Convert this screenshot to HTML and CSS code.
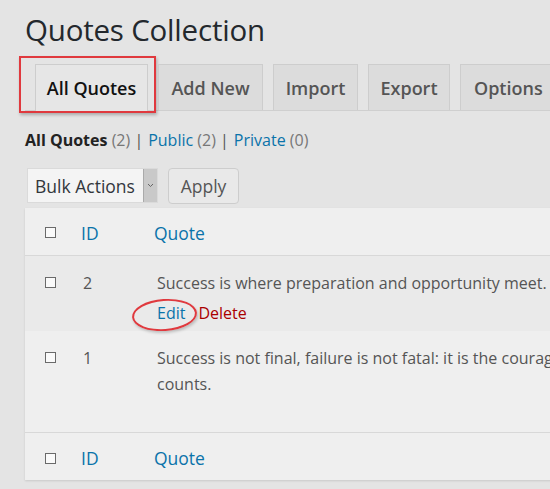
FILE: index.html
```html
<!DOCTYPE html>
<html>
<head>
<meta charset="utf-8">
<link rel="stylesheet" href="styles.css">
</head>
<body>
<div class="wrap">
  <h1 class="title">Quotes Collection</h1>
  <nav class="tabs">
    <a class="tab active">All Quotes<span class="callout-box"></span></a>
    <a class="tab">Add New</a>
    <a class="tab">Import</a>
    <a class="tab">Export</a>
    <a class="tab">Options</a>
  </nav>
  <ul class="filters">
    <li><b>All Quotes</b> <span class="count">(2)</span> |</li>
    <li><a class="link">Public</a> <span class="count">(2)</span> |</li>
    <li><a class="link">Private</a> <span class="count">(0)</span></li>
  </ul>
  <div class="bulk">
    <div class="select"><span class="select-label">Bulk Actions</span><span class="select-arrow"><svg width="7" height="5" viewBox="0 0 7 5"><path d="M1 1l2.5 2.5L6 1" fill="none" stroke="#666" stroke-width="1"/></svg></span></div>
    <button class="btn">Apply</button>
  </div>
  <div class="table">
    <div class="row head">
      <div class="cb"><span class="box"></span></div>
      <div class="id"><a class="link">ID</a></div>
      <div class="quote"><a class="link">Quote</a></div>
    </div>
    <div class="row item dark">
      <div class="cb"><span class="box"></span></div>
      <div class="id">2</div>
      <div class="quote text">
        <div>Success is where preparation and opportunity meet.</div>
        <div class="actions"><a class="link edit">Edit<span class="callout-ring"></span></a><a class="del">Delete</a></div>
      </div>
    </div>
    <div class="row item tall">
      <div class="cb"><span class="box"></span></div>
      <div class="id">1</div>
      <div class="quote text">Success is not final, failure is not fatal: it is the courage to continue that counts.</div>
    </div>
    <div class="row head foot">
      <div class="cb"><span class="box"></span></div>
      <div class="id"><a class="link">ID</a></div>
      <div class="quote"><a class="link">Quote</a></div>
    </div>
  </div>
</div>
</body>
</html>
```

FILE: styles.css
```css
html, body {
  margin: 0;
  padding: 0;
  overflow: hidden;
}
body {
  background: #e4e4e4;
  font-family: "Open Sans", "Noto Sans", sans-serif;
  color: #444;
  width: 550px;
  height: 489px;
}
.wrap {
  padding: 12px 0 0 25px;
  width: 800px;
}
.title {
  margin: 0;
  font-size: 29.5px;
  font-weight: 400;
  line-height: 36px;
  color: #23282d;
  letter-spacing: -0.2px;
}
.tabs {
  display: flex;
  gap: 10px;
  margin-top: 16px;
  padding-left: 10px;
  border-bottom: 1px solid #cfcfcf;
  height: 46px;
}
.tab {
  position: relative;
  display: flex;
  align-items: center;
  justify-content: center;
  box-sizing: border-box;
  height: 46px;
  background: #dcdcdc;
  border: 1px solid #cdcdcd;
  border-bottom: none;
  font-size: 18px;
  font-weight: 600;
  color: #555;
}
.tab:nth-child(1) { width: 113px; }
.tab:nth-child(2) { width: 105px; }
.tab:nth-child(3) { width: 85px; }
.tab:nth-child(4) { width: 82px; }
.tab:nth-child(5) { width: 95px; justify-content: flex-start; padding-left: 13px; }
.tab.active {
  background: #e6e6e6;
  color: #111;
  height: 47px;
  margin-bottom: -1px;
}
.callout-box {
  position: absolute;
  left: -17px;
  top: -9px;
  width: 137px;
  height: 57px;
  box-sizing: border-box;
  border: 2px solid #e0393e;
  box-shadow: 1px 2px 3px rgba(0,0,0,0.25);
}
.filters {
  list-style: none;
  margin: 17px 0 0;
  padding: 0;
  display: flex;
  gap: 5px;
  font-size: 16px;
  line-height: 24px;
  color: #555;
}
.filters b { color: #222; font-weight: 700; }
.count { color: #777; }
.link { color: #0a73aa; }
.bulk {
  display: flex;
  gap: 10px;
  margin-top: 16px;
  padding-left: 2px;
  height: 36px;
}
.select {
  display: flex;
  box-sizing: border-box;
  width: 131px;
  height: 35px;
  background: #f4f4f4;
  border: 1px solid #dadada;
}
.select-label {
  flex: 1;
  display: flex;
  align-items: center;
  padding-left: 7px;
  font-size: 17.5px;
  color: #32373c;
}
.select-arrow {
  width: 13px;
  display: flex;
  align-items: center;
  justify-content: center;
  background: #c9c9c9;
  border-left: 1px solid #aaa;
}
.btn {
  box-sizing: border-box;
  width: 71px;
  height: 36px;
  background: #e9e9e9;
  border: 1px solid #cdcdcd;
  border-radius: 4px;
  font-family: inherit;
  font-size: 17.5px;
  color: #555;
  padding: 0;
}
.table {
  margin-top: 4px;
  width: 690px;
  background: #efefef;
  box-shadow: 0 1px 2px rgba(0,0,0,0.12);
}
.row {
  display: flex;
  font-size: 16px;
  line-height: 26px;
}
.head {
  height: 48px;
  align-items: center;
  border-bottom: 1px solid #d8d8d8;
  box-sizing: border-box;
  font-size: 17.5px;
  padding-top: 2px;
}
.foot {
  border-bottom: none;
  border-top: 1px solid #d8d8d8;
  height: 48px;
  padding-top: 3px;
}
.item {
  box-sizing: border-box;
  padding-top: 14px;
}
.dark { background: #eaeaea; height: 75px; }
.tall { height: 101px; }
.cb {
  width: 56px;
  display: flex;
  justify-content: flex-end;
  box-sizing: border-box;
}
.cb .box {
  display: block;
  width: 11px;
  height: 11px;
  box-sizing: border-box;
  border: 1px solid #6a6a6a;
  background: #fafafa;
  margin-right: 25px;
}
.item .cb .box { margin-top: 7px; }
.id {
  width: 73px;
}
.item .id { padding-left: 2px; box-sizing: border-box; color: #555; }
.quote { flex: 1; }
.item .quote { padding-left: 3px; color: #555; }
.actions { margin-top: 4px; }
.edit { position: relative; }
.callout-ring {
  position: absolute;
  left: -25px;
  top: -3px;
  width: 65px;
  height: 32px;
  box-sizing: border-box;
  border: 2px solid #e0393e;
  border-radius: 50%;
  transform: rotate(-4deg);
  box-shadow: 1px 2px 3px rgba(0,0,0,0.2);
}
.del { color: #a00; margin-left: 13px; }
```
